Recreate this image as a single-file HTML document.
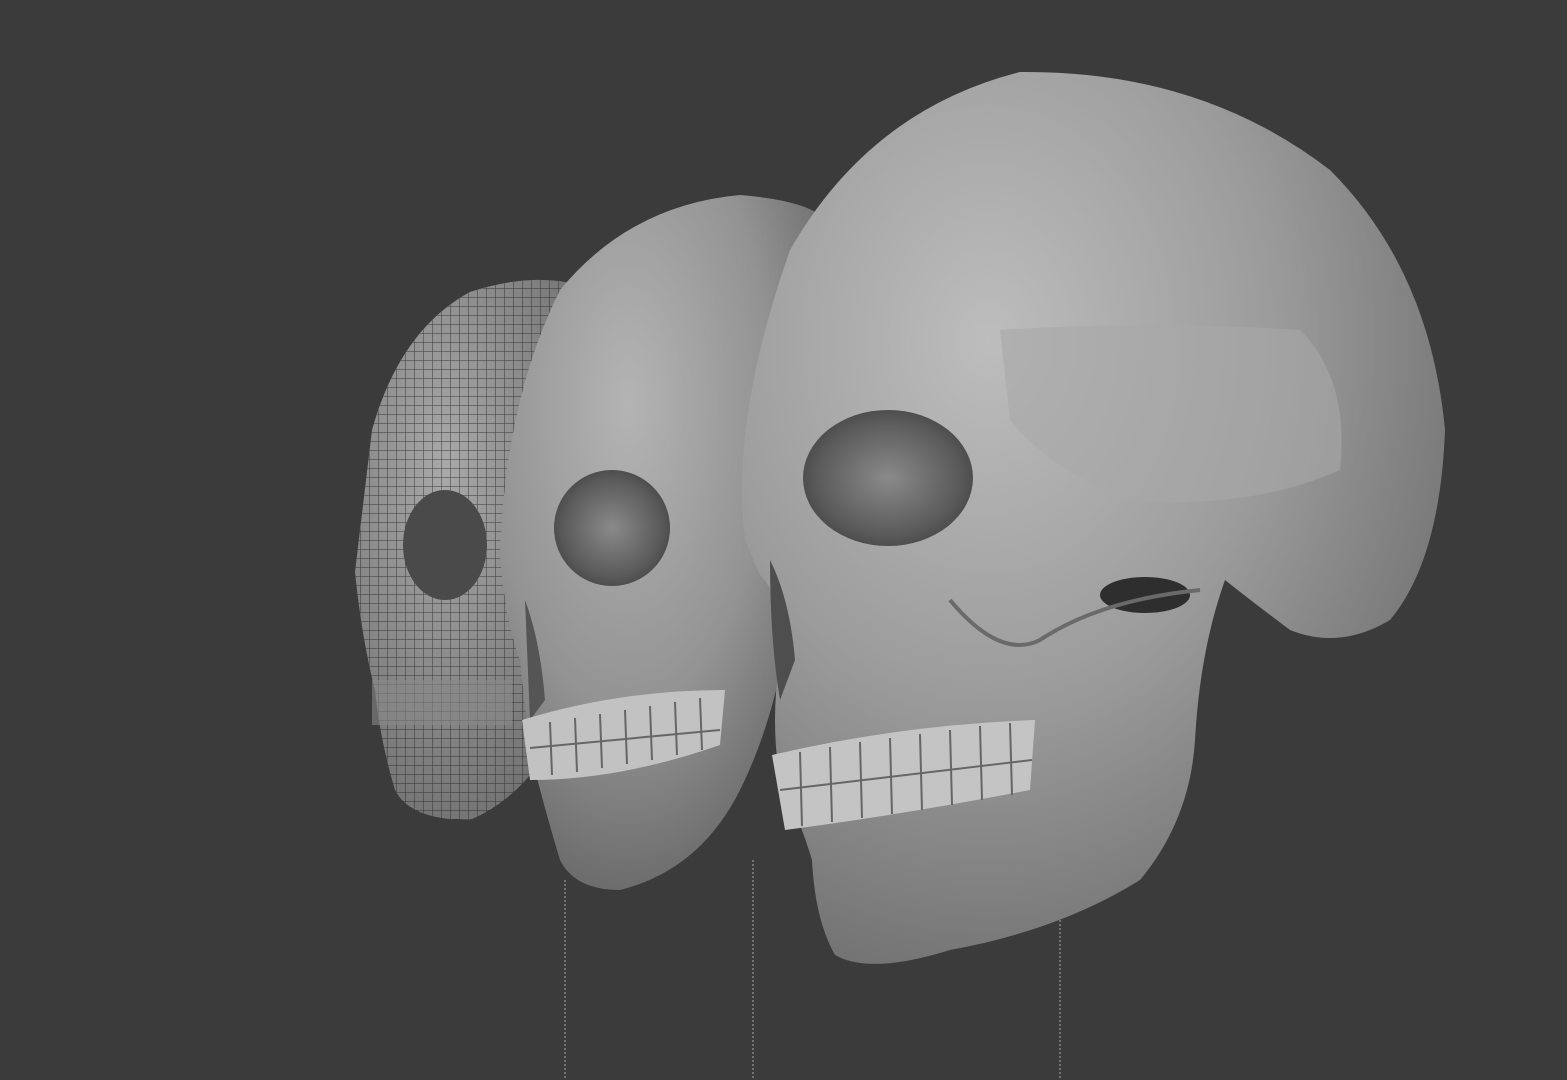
<!DOCTYPE html>
<html><head><meta charset="utf-8"><style>
html,body{margin:0;padding:0;background:#3b3b3b;}
svg{display:block;}
</style></head><body>
<svg width="1567" height="1080" viewBox="0 0 1567 1080" xmlns="http://www.w3.org/2000/svg">
<defs>
<radialGradient id="gL" cx="0.35" cy="0.3" r="0.8">
<stop offset="0" stop-color="#bdbdbd"/><stop offset="0.5" stop-color="#9c9c9c"/><stop offset="1" stop-color="#6a6a6a"/></radialGradient>
<radialGradient id="gM" cx="0.4" cy="0.3" r="0.8">
<stop offset="0" stop-color="#b4b4b4"/><stop offset="0.55" stop-color="#939393"/><stop offset="1" stop-color="#5e5e5e"/></radialGradient>
<radialGradient id="gW" cx="0.4" cy="0.35" r="0.8">
<stop offset="0" stop-color="#a9a9a9"/><stop offset="1" stop-color="#6a6a6a"/></radialGradient>
<radialGradient id="eye" cx="0.5" cy="0.5" r="0.6">
<stop offset="0" stop-color="#8a8a8a"/><stop offset="0.7" stop-color="#5a5a5a"/><stop offset="1" stop-color="#3e3e3e"/></radialGradient>
<pattern id="grid" width="9" height="9" patternUnits="userSpaceOnUse">
<path d="M9 0H0V9" fill="none" stroke="#222" stroke-width="1"/></pattern>
</defs>
<rect width="1567" height="1080" fill="#3b3b3b"/>
<g stroke="#aaa" stroke-width="1" stroke-dasharray="2 2">
<line x1="565" y1="880" x2="565" y2="1080"/>
<line x1="753" y1="860" x2="753" y2="1080"/>
<line x1="1060" y1="880" x2="1060" y2="1080"/>
</g>
<!-- wireframe skull -->
<path d="M355 572 L372 430 Q400 330 470 292 Q530 272 580 285 L570 700 Q540 790 470 820 Q410 820 395 790 Q380 740 375 690 Q362 640 355 572Z" fill="url(#gW)"/>
<path d="M355 572 L372 430 Q400 330 470 292 Q530 272 580 285 L570 700 Q540 790 470 820 Q410 820 395 790 Q380 740 375 690 Q362 640 355 572Z" fill="url(#grid)" opacity="0.8"/>
<ellipse cx="445" cy="545" rx="42" ry="55" fill="#4a4a4a"/>
<rect x="372" y="680" width="140" height="45" fill="#888" opacity="0.6"/>
<!-- medium skull -->
<path d="M500 555 Q505 400 560 290 Q630 205 740 195 Q800 200 820 215 L790 620 Q775 720 740 790 Q700 870 620 890 Q575 890 560 860 Q545 810 535 770 Q525 720 520 660 Q505 620 500 555Z" fill="url(#gM)"/>
<ellipse cx="612" cy="528" rx="58" ry="58" fill="url(#eye)"/>
<path d="M525 600 Q540 640 545 700 L530 720Z" fill="#555"/>
<path d="M522 720 Q620 690 725 690 L720 745 Q620 780 530 780Z" fill="#c2c2c2"/>
<g stroke="#666" stroke-width="2">
<line x1="530" y1="748" x2="720" y2="730"/>
<line x1="550" y1="722" x2="552" y2="775"/><line x1="575" y1="718" x2="577" y2="772"/>
<line x1="600" y1="714" x2="602" y2="768"/><line x1="625" y1="710" x2="627" y2="764"/>
<line x1="650" y1="706" x2="652" y2="760"/><line x1="675" y1="702" x2="677" y2="755"/>
<line x1="700" y1="698" x2="702" y2="750"/></g>
<!-- large skull -->
<path d="M745 540 Q730 420 790 250 Q870 110 1020 72 Q1200 70 1330 170 Q1430 270 1445 430 Q1440 560 1390 620 Q1340 650 1290 630 Q1250 600 1225 580 Q1200 650 1195 740 Q1190 820 1140 880 Q1060 930 950 950 Q870 975 835 955 Q815 920 812 860 Q800 820 780 780 Q770 720 780 660 Q785 600 760 575Z" fill="url(#gL)"/>
<path d="M1000 330 Q1150 320 1300 330 Q1350 380 1340 470 Q1250 510 1130 500 Q1050 470 1010 420Z" fill="#a8a8a8" opacity="0.6"/>
<ellipse cx="888" cy="478" rx="85" ry="68" fill="url(#eye)"/>
<ellipse cx="1145" cy="595" rx="45" ry="18" fill="#2e2e2e"/>
<path d="M770 560 Q790 600 795 660 L780 700 Q770 640 770 560Z" fill="#4e4e4e"/>
<path d="M772 755 Q900 725 1035 720 L1030 790 Q900 815 785 830Z" fill="#c4c4c4"/>
<g stroke="#666" stroke-width="2">
<line x1="780" y1="790" x2="1032" y2="760"/>
<line x1="800" y1="752" x2="802" y2="826"/><line x1="830" y1="747" x2="832" y2="822"/>
<line x1="860" y1="742" x2="862" y2="818"/><line x1="890" y1="738" x2="892" y2="814"/>
<line x1="920" y1="734" x2="922" y2="810"/><line x1="950" y1="730" x2="952" y2="805"/>
<line x1="980" y1="726" x2="982" y2="800"/><line x1="1010" y1="723" x2="1012" y2="795"/></g>
<path d="M950 600 Q1000 660 1040 640 Q1100 600 1200 590" fill="none" stroke="#6a6a6a" stroke-width="4"/>
</svg>
</body></html>
